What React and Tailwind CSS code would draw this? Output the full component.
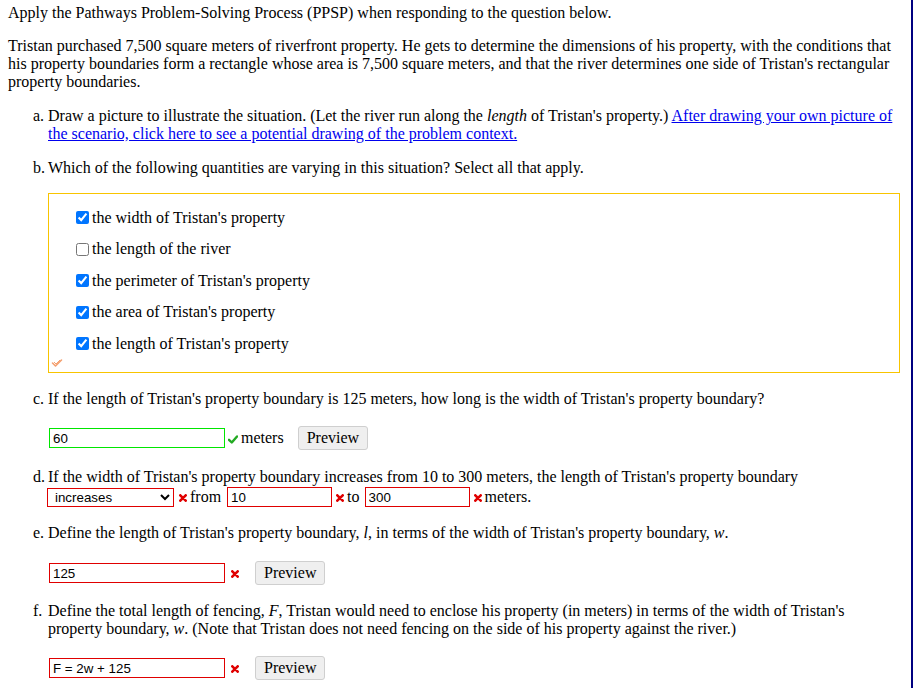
import React from "react";

const serif = { fontFamily: '"Liberation Serif", "Times New Roman", serif' };

function GreenCheck() {
  return (
    <svg width="10" height="9" viewBox="0 0 10 9" className="inline-block">
      <path d="M1 4.8 L3.8 7.5 L9 1.5" fill="none" stroke="#22aa22" strokeWidth="2.4" strokeLinecap="round" strokeLinejoin="round" />
    </svg>
  );
}

function RedX() {
  return (
    <svg width="8" height="8" viewBox="0 0 8 8" className="inline-block">
      <path d="M1.3 1.3 L6.7 6.7 M6.7 1.3 L1.3 6.7" fill="none" stroke="#e00000" strokeWidth="2.6" strokeLinecap="round" />
    </svg>
  );
}

function OrangeIcon() {
  return (
    <svg width="12" height="10" viewBox="0 0 12 10">
      <path d="M1.5 5 L4.5 8 L10.5 2" fill="none" stroke="#f4a070" strokeWidth="1.6" strokeLinejoin="round" strokeLinecap="round" />
      <path d="M3 4 L5 6 L9 2" fill="none" stroke="#f4a070" strokeWidth="1" />
    </svg>
  );
}

function TextInput({ value, color, width = "w-[176px]" }) {
  return (
    <input
      type="text"
      defaultValue={value}
      readOnly
      className={`${width} h-[20px] border ${color} px-[3px] text-[13.33px] text-black outline-none`}
      style={{ fontFamily: '"Liberation Sans", Arial, sans-serif' }}
    />
  );
}

function PreviewBtn() {
  return (
    <button
      className="h-[24px] px-[8px] rounded-[3px] border border-[#cfcfcf] bg-[#efefef] text-[16px] leading-none text-black"
      style={serif}
    >
      Preview
    </button>
  );
}

function Item({ label, children, extra = "" }) {
  return (
    <div className="flex pl-[25px]">
      <span className="w-[15px] shrink-0">{label}</span>
      <div className={`flex-1 ${extra}`}>{children}</div>
    </div>
  );
}

const options = [
  ["the width of Tristan's property", true],
  ["the length of the river", false],
  ["the perimeter of Tristan's property", true],
  ["the area of Tristan's property", true],
  ["the length of Tristan's property", true],
];

export default function App() {
  return (
    <div className="w-[913px] h-[688px] bg-white overflow-hidden flex" style={serif}>
      <div className="flex-1 pl-[8px] pr-[8px] pt-[4px] text-[16px] leading-[18px] text-black">
        <p>Apply the Pathways Problem-Solving Process (PPSP) when responding to the question below.</p>
        <p className="mt-[15px]">
          Tristan purchased 7,500 square meters of riverfront property. He gets to determine the dimensions of his property, with the conditions that his property boundaries form a rectangle whose area is 7,500 square meters, and that the river determines one side of Tristan's rectangular property boundaries.
        </p>

        <div className="mt-[16px]">
          <Item label="a.">
            Draw a picture to illustrate the situation. (Let the river run along the <i>length</i> of Tristan's property.){" "}
            <a className="text-[#0000ee] underline">After drawing your own picture of the scenario, click here to see a potential drawing of the problem context.</a>
          </Item>
        </div>

        <div className="mt-[16px]">
          <Item label="b.">Which of the following quantities are varying in this situation? Select all that apply.</Item>
        </div>

        <div className="ml-[40px] mr-[3px] mt-[16px] border border-[#f8c400] h-[180px] relative pt-[8px] pl-[27px]">
          {options.map(([t, c], i) => (
            <label key={i} className="flex items-center h-[31.5px]">
              <input type="checkbox" defaultChecked={c} readOnly className="w-[13px] h-[13px] m-0 mr-[3px] accent-[#0075ff]" />
              <span>{t}</span>
            </label>
          ))}
          <div className="absolute left-[2px] bottom-[4px]">
            <OrangeIcon />
          </div>
        </div>

        <div className="mt-[17px]">
          <Item label="c.">If the length of Tristan's property boundary is 125 meters, how long is the width of Tristan's property boundary?</Item>
        </div>
        <div className="ml-[41px] mt-[18px] flex items-center h-[24px]">
          <TextInput value="60" color="border-[#00e600]" />
          <span className="ml-[3px]"><GreenCheck /></span>
          <span className="ml-[3px]">meters</span>
          <span className="ml-[14px]"><PreviewBtn /></span>
        </div>

        <div className="mt-[18px]">
          <Item label="d.">
            If the width of Tristan's property boundary increases from 10 to 300 meters, the length of Tristan's property boundary
            <div className="flex items-center h-[20px] mt-[1px]" style={{ marginLeft: "-1px" }}>
              <select
                className="w-[127px] h-[19px] border border-[#e00000] text-[13.33px] pl-[3px] bg-white text-black"
                style={{ fontFamily: '"Liberation Sans", Arial, sans-serif' }}
                defaultValue="increases"
              >
                <option>increases</option>
              </select>
              <span className="ml-[5px]"><RedX /></span>
              <span className="ml-[3px]">from</span>
              <span className="ml-[6px]"><TextInput value="10" color="border-[#e00000]" width="w-[105px]" /></span>
              <span className="ml-[4px]"><RedX /></span>
              <span className="ml-[3px]">to</span>
              <span className="ml-[5px]"><TextInput value="300" color="border-[#e00000]" width="w-[105px]" /></span>
              <span className="ml-[4px]"><RedX /></span>
              <span className="ml-[3px]">meters.</span>
            </div>
          </Item>
        </div>

        <div className="mt-[17px]">
          <Item label="e.">
            Define the length of Tristan's property boundary, <i>l</i>, in terms of the width of Tristan's property boundary, <i>w</i>.
          </Item>
        </div>
        <div className="ml-[41px] mt-[19px] flex items-center h-[24px]">
          <TextInput value="125" color="border-[#e00000]" />
          <span className="ml-[6px]"><RedX /></span>
          <span className="ml-[16px]"><PreviewBtn /></span>
        </div>

        <div className="mt-[17px]">
          <Item label="f." extra="pr-[40px]">
            Define the total length of fencing, <i>F</i>, Tristan would need to enclose his property (in meters) in terms of the width of Tristan's property boundary, <i>w</i>. (Note that Tristan does not need fencing on the side of his property against the river.)
          </Item>
        </div>
        <div className="ml-[41px] mt-[18px] flex items-center h-[24px]">
          <TextInput value="F = 2w + 125" color="border-[#e00000]" />
          <span className="ml-[6px]"><RedX /></span>
          <span className="ml-[16px]"><PreviewBtn /></span>
        </div>
      </div>
      <div className="w-[2px] bg-[#000080] h-full" />
    </div>
  );
}
